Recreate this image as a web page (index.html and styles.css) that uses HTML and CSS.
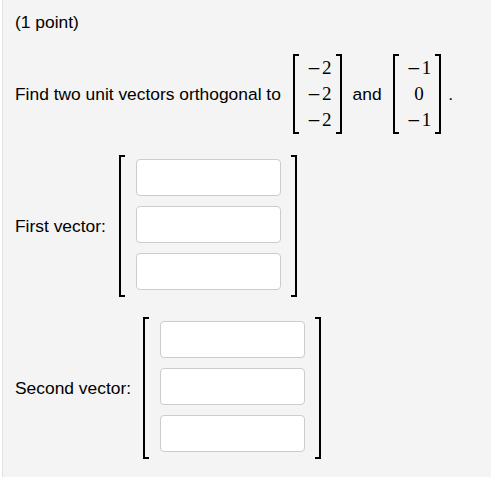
FILE: index.html
```html
<!DOCTYPE html>
<html>
<head>
<meta charset="utf-8">
<link rel="stylesheet" href="styles.css">
</head>
<body>
<div class="panel">
  <div class="points">(1 point)</div>
  <div class="question">
    <span class="qtext">Find two unit vectors orthogonal to</span>
    <span class="matrix">
      <span class="br br-l"></span>
      <span class="col">
        <span class="cell"><span class="minus">−</span>2</span>
        <span class="cell"><span class="minus">−</span>2</span>
        <span class="cell"><span class="minus">−</span>2</span>
      </span>
      <span class="br br-r"></span>
    </span>
    <span class="qtext and">and</span>
    <span class="matrix">
      <span class="br br-l"></span>
      <span class="col">
        <span class="cell"><span class="minus">−</span>1</span>
        <span class="cell">0</span>
        <span class="cell"><span class="minus">−</span>1</span>
      </span>
      <span class="br br-r"></span>
    </span>
    <span class="qtext dot">.</span>
  </div>
  <div class="vec-row">
    <span class="label">First vector:</span>
    <span class="vbr vbr-l"></span>
    <span class="inputs">
      <input class="field" type="text">
      <input class="field" type="text">
      <input class="field" type="text">
    </span>
    <span class="vbr vbr-r"></span>
  </div>
  <div class="vec-row second">
    <span class="label">Second vector:</span>
    <span class="vbr vbr-l"></span>
    <span class="inputs">
      <input class="field" type="text">
      <input class="field" type="text">
      <input class="field" type="text">
    </span>
    <span class="vbr vbr-r"></span>
  </div>
</div>
</body>
</html>
```
FILE: styles.css
```css
html, body {
  margin: 0;
  padding: 0;
  background: #ffffff;
}
body {
  font-family: "Liberation Sans", Arial, sans-serif;
  font-size: 17.4px;
  color: #000;
}
.panel {
  margin-left: 2px;
  border-left: 1px solid #e2e2e2;
  background: #f4f4f4;
  height: 477px;
  box-sizing: border-box;
  padding: 13px 0 0 12px;
}
.points {
  line-height: 19px;
}
.question {
  display: flex;
  align-items: center;
  margin-top: 22px;
}
.qtext {
  line-height: 19px;
}
.and {
  margin: 0 11px;
}
.dot {
  margin-left: 7px;
}
.matrix {
  display: inline-flex;
  align-items: stretch;
  margin-left: 12px;
}
.and + .matrix {
  margin-left: 0;
}
.br {
  width: 4px;
  border-top: 2px solid #000;
  border-bottom: 2px solid #000;
}
.br-l {
  border-left: 2px solid #000;
}
.br-r {
  border-right: 2px solid #000;
}
.col {
  display: flex;
  flex-direction: column;
  padding: 1px 4px 1px 8px;
  font-family: "Liberation Serif", "Times New Roman", serif;
  font-size: 19px;
}
.cell {
  line-height: 26px;
  text-align: center;
}
.minus {
  font-family: "DejaVu Serif", serif;
  font-size: 17px;
  margin-right: 1px;
}
.vec-row {
  display: flex;
  align-items: center;
  margin-top: 21px;
}
.second {
  margin-top: 20px;
}
.label {
  margin-right: 13px;
}
.second .label {
  margin-right: 12px;
}
.vbr {
  align-self: stretch;
  width: 4px;
  border-top: 2px solid #000;
  border-bottom: 2px solid #000;
}
.vbr-l {
  border-left: 2px solid #000;
}
.vbr-r {
  border-right: 2px solid #000;
}
.inputs {
  display: flex;
  flex-direction: column;
  gap: 10px;
  padding: 4px 10px 7px 11px;
}
.field {
  box-sizing: border-box;
  width: 145px;
  height: 37px;
  margin: 0;
  padding: 4px 6px;
  border: 1px solid #cccccc;
  border-radius: 4px;
  background: #ffffff;
  font-family: "Liberation Sans", Arial, sans-serif;
  font-size: 16px;
  outline: none;
}
```
